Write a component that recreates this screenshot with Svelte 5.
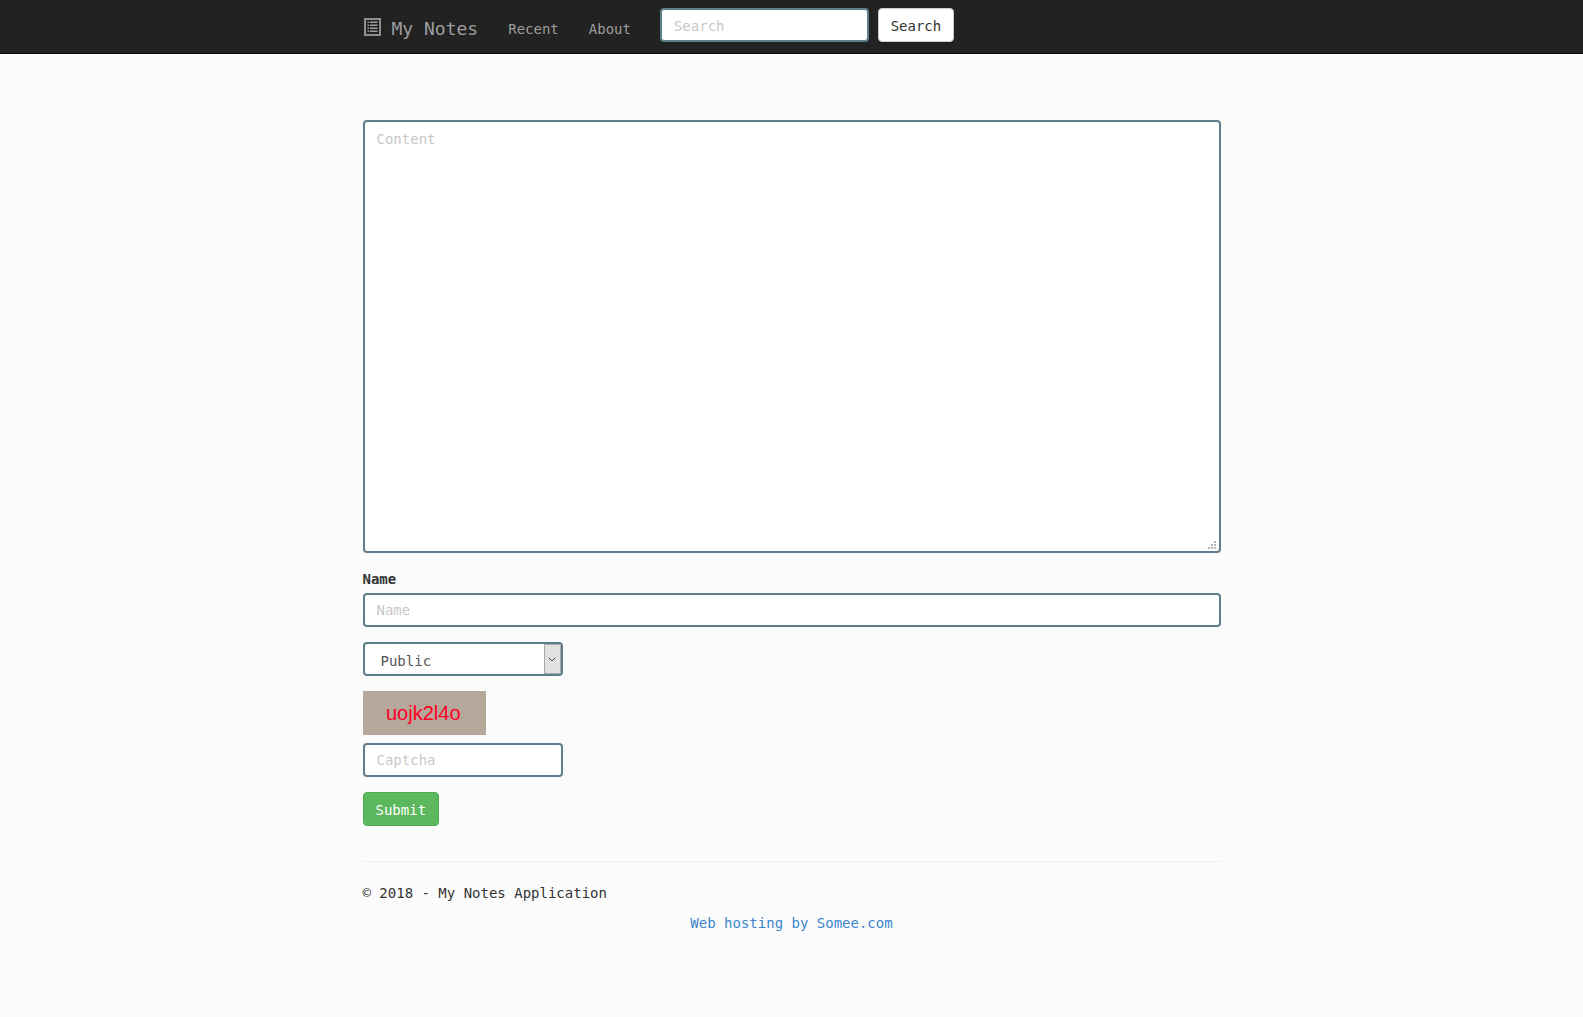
<script>
  let content = ''
  let name = ''
  let captcha = ''
  let search = ''
  let visibility = 'Public'
</script>

<nav class="navbar">
  <div class="nav-inner">
    <a class="brand" href="#home">
      <svg class="brand-icon" width="18" height="18" viewBox="0 0 18 18" aria-hidden="true">
        <path fill="#8f8f8f" fill-rule="evenodd" d="M1 0h17v18H1zM3 2v14h13V2z" />
        <path fill="#9d9d9d" d="M4.5 3.5h1.6v1.6H4.5zM7 3.5h7.5v1.6H7zM4.5 6.5h1.6v1.6H4.5zM7 6.5h7.5v1.6H7zM4.5 9.5h1.6v1.6H4.5zM7 9.5h7.5v1.6H7zM4.5 12.5h1.6v1.6H4.5zM7 12.5h7.5v1.6H7z" />
      </svg>
      My Notes
    </a>
    <a class="nav-link" href="#recent">Recent</a>
    <a class="nav-link" href="#about">About</a>
    <form class="nav-search" on:submit|preventDefault>
      <input class="field search-field" placeholder="Search" bind:value={search} />
      <button class="btn search-btn">Search</button>
    </form>
  </div>
</nav>

<main class="container">
  <form class="note-form" on:submit|preventDefault>
    <div class="textarea-wrap">
      <textarea class="field content-field" placeholder="Content" bind:value={content}></textarea>
      <svg class="grip" width="8" height="8" viewBox="0 0 8 8" aria-hidden="true">
        <path fill="#b4b4b4" d="M6 0h2v2H6zM6 3h2v2H6zM3 3h2v2H3zM6 6h2v2H6zM3 6h2v2H3zM0 6h2v2H0z" />
      </svg>
    </div>

    <div class="group">
      <label for="name">Name</label>
      <input id="name" class="field" placeholder="Name" bind:value={name} />
    </div>

    <div class="select-wrap">
      <select class="field select-field" bind:value={visibility}>
        <option>Public</option>
        <option>Private</option>
      </select>
      <span class="select-arrow">
        <svg width="8" height="5" viewBox="0 0 8 5" aria-hidden="true">
          <path d="M.7.7 4 4 7.3.7" fill="none" stroke="#444" stroke-width="1" />
        </svg>
      </span>
    </div>

    <div class="captcha-image">uojk2l4o</div>
    <input class="field short" placeholder="Captcha" bind:value={captcha} />

    <button class="btn btn-success">Submit</button>
  </form>

  <hr />
  <footer>
    <p>© 2018 - My Notes Application</p>
    <a class="hosting" href="#somee">Web hosting by Somee.com</a>
  </footer>
</main>

<style>
  :global(body) {
    background: #fbfbfb;
    color: #333;
    font-family: "DejaVu Sans Mono", "Liberation Mono", monospace;
    font-size: 14px;
    line-height: 20px;
  }

  .navbar {
    background: #222;
    border-bottom: 1px solid #080808;
    height: 53px;
  }

  .nav-inner {
    width: 858px;
    margin: 0 auto;
    display: flex;
    align-items: flex-start;
  }

  .brand {
    display: flex;
    align-items: center;
    gap: 11px;
    color: #9d9d9d;
    font-size: 18px;
    height: 58px;
    padding-right: 15px;
    text-decoration: none;
  }

  .brand-icon {
    flex: none;
    margin-bottom: 4px;
  }

  .nav-link {
    color: #9d9d9d;
    text-decoration: none;
    padding: 19px 15px 14px;
  }

  .nav-search {
    display: flex;
    gap: 9px;
    margin: 8px 0 0 14px;
  }

  .field {
    display: block;
    box-sizing: border-box;
    width: 100%;
    height: 34px;
    padding: 6px 12px;
    border: 2px solid #5f7d8b;
    border-radius: 4px;
    background: #fff;
    color: #555;
    font: inherit;
    outline: none;
  }

  .field::placeholder {
    color: #c8c8c8;
    opacity: 1;
  }

  .search-field {
    width: 209px;
    padding: 7px 12px 5px;
  }

  .btn {
    box-sizing: border-box;
    height: 34px;
    padding: 7px 12px 5px;
    border: 1px solid #ccc;
    border-radius: 4px;
    background: #fff;
    color: #333;
    font: inherit;
  }

  .search-btn {
    width: 76px;
    padding-left: 0;
    padding-right: 0;
  }

  .btn-success {
    display: block;
    background: #5cb85c;
    border-color: #4cae4c;
    color: #fff;
    margin-top: 15px;
  }

  .container {
    width: 858px;
    margin: 0 auto;
    padding-top: 66px;
  }

  .textarea-wrap {
    position: relative;
  }

  .content-field {
    height: 433px;
    padding-top: 7px;
    resize: none;
  }

  .grip {
    position: absolute;
    right: 5px;
    bottom: 4px;
    pointer-events: none;
  }

  .group {
    margin-top: 15px;
  }

  label {
    display: block;
    font-weight: 700;
    padding-top: 1px;
    margin-bottom: 4px;
  }

  .select-wrap {
    position: relative;
    width: 200px;
    margin-top: 15px;
  }

  .select-field {
    appearance: none;
    padding: 7px 12px 5px 16px;
  }

  .select-arrow {
    position: absolute;
    top: 2px;
    right: 2px;
    bottom: 2px;
    width: 17px;
    display: flex;
    align-items: center;
    justify-content: center;
    background: #e1e1e1;
    border: 1px solid #a9a9a9;
    box-sizing: border-box;
    pointer-events: none;
  }

  .captcha-image {
    box-sizing: border-box;
    width: 123px;
    height: 44px;
    margin-top: 15px;
    padding-left: 23.5px;
    background: #b5a79a;
    color: #ff0026;
    font-family: "Liberation Sans", Arial, sans-serif;
    font-size: 20px;
    line-height: 44px;
  }

  .short {
    width: 200px;
    margin-top: 8px;
  }

  hr {
    border: 0;
    border-top: 1px solid #eee;
    margin: 35px 0 21px;
  }

  footer p {
    margin: 0 0 10px;
  }

  .hosting {
    display: block;
    text-align: center;
    color: #3d86cc;
    text-decoration: none;
  }
</style>
